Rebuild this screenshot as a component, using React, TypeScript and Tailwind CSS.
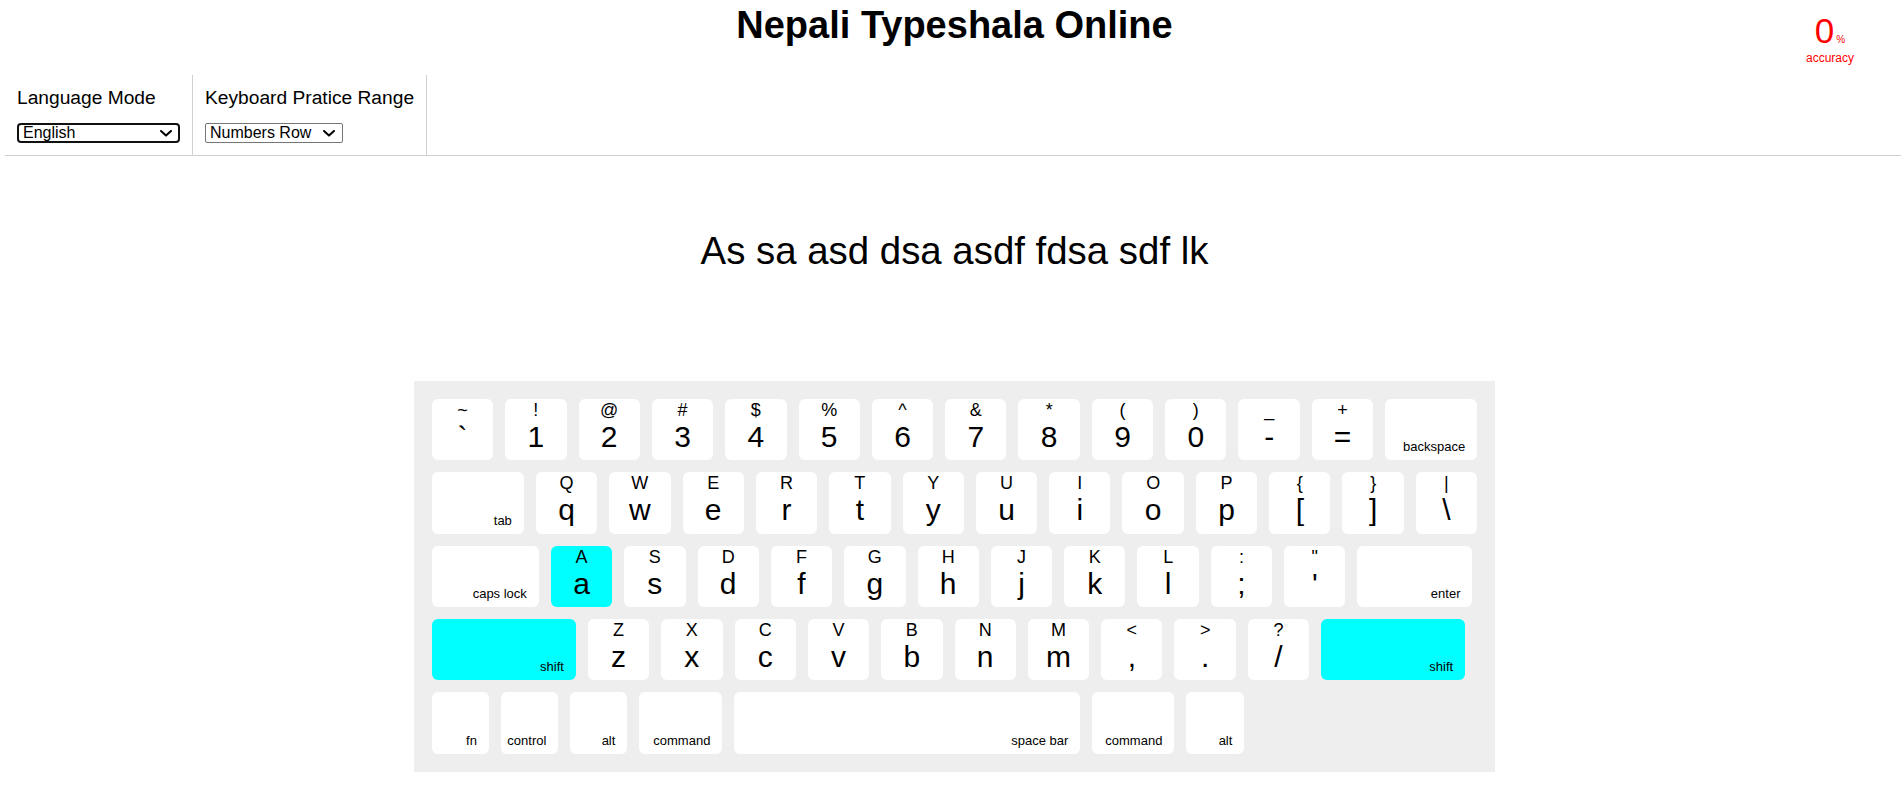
import React from "react";

type KeyDef = { t: string; b: string; hl?: boolean };

function Key({ t, b, hl }: KeyDef) {
  return (
    <div
      className={`${hl ? "bg-[#00ffff]" : "bg-white"} w-[61.33px] h-[61.33px] shrink-0 rounded-[6px] flex flex-col items-center pt-[2px] text-black`}
    >
      <div className="text-[18px] leading-[18px] h-[18px]">{t}</div>
      <div className="text-[30px] leading-[30px] mt-[3px]">{b}</div>
    </div>
  );
}

function Mod({ label, w, hl }: { label: string; w: string; hl?: boolean }) {
  return (
    <div
      className={`${hl ? "bg-[#00ffff]" : "bg-white"} ${w} h-[61.33px] shrink-0 rounded-[6px] flex items-end justify-end pr-3 pb-[7px]`}
    >
      <span className="text-[13px] leading-[13px] text-black whitespace-nowrap">{label}</span>
    </div>
  );
}

function Chevron() {
  return (
    <svg
      className="pointer-events-none absolute right-[8px] top-[7px]"
      width="12"
      height="7"
      viewBox="0 0 12 7"
      fill="none"
    >
      <path d="M1 1 L6 5.6 L11 1" stroke="#000" strokeWidth="2" strokeLinecap="round" strokeLinejoin="round" />
    </svg>
  );
}

const row1: KeyDef[] = [
  { t: "~", b: "`" },
  { t: "!", b: "1" },
  { t: "@", b: "2" },
  { t: "#", b: "3" },
  { t: "$", b: "4" },
  { t: "%", b: "5" },
  { t: "^", b: "6" },
  { t: "&", b: "7" },
  { t: "*", b: "8" },
  { t: "(", b: "9" },
  { t: ")", b: "0" },
  { t: "_", b: "-" },
  { t: "+", b: "=" },
];

const row2: KeyDef[] = [
  { t: "Q", b: "q" },
  { t: "W", b: "w" },
  { t: "E", b: "e" },
  { t: "R", b: "r" },
  { t: "T", b: "t" },
  { t: "Y", b: "y" },
  { t: "U", b: "u" },
  { t: "I", b: "i" },
  { t: "O", b: "o" },
  { t: "P", b: "p" },
  { t: "{", b: "[" },
  { t: "}", b: "]" },
  { t: "|", b: "\\" },
];

const row3: KeyDef[] = [
  { t: "A", b: "a", hl: true },
  { t: "S", b: "s" },
  { t: "D", b: "d" },
  { t: "F", b: "f" },
  { t: "G", b: "g" },
  { t: "H", b: "h" },
  { t: "J", b: "j" },
  { t: "K", b: "k" },
  { t: "L", b: "l" },
  { t: ":", b: ";" },
  { t: '"', b: "'" },
];

const row4: KeyDef[] = [
  { t: "Z", b: "z" },
  { t: "X", b: "x" },
  { t: "C", b: "c" },
  { t: "V", b: "v" },
  { t: "B", b: "b" },
  { t: "N", b: "n" },
  { t: "M", b: "m" },
  { t: "<", b: "," },
  { t: ">", b: "." },
  { t: "?", b: "/" },
];

export default function App() {
  return (
    <div
      className="min-h-screen bg-white text-black"
      style={{ fontFamily: '"Liberation Sans", Arial, Helvetica, sans-serif' }}
    >
      {/* Header */}
      <div className="relative h-[75px] pt-[4px] pl-2">
        <h1 className="text-[38px] leading-[43px] font-bold text-center">Nepali Typeshala Online</h1>
        <div className="absolute top-[13px] right-[40px] w-[62px] flex flex-col items-center text-[#ff0000]">
          <div className="flex items-baseline">
            <span className="text-[35px] leading-[35px]">0</span>
            <span className="text-[10px] leading-[10px] ml-[2px]">%</span>
          </div>
          <div className="text-[12px] leading-[12px] mt-[4px]">accuracy</div>
        </div>
      </div>

      {/* Nav */}
      <div className="ml-[5px] flex border-b border-[#d0d0d0]">
        <div className="px-3 pt-3 pb-3 border-r border-[#d0d0d0]">
          <div className="text-[19.2px] leading-[22px] mb-[14px] whitespace-nowrap">Language Mode</div>
          <div className="relative w-[163px] h-[20px]">
            <select
              defaultValue="English"
              className="block appearance-none w-[163px] h-[20px] text-[16px] leading-[16px] pl-[4px] border-2 border-[#101010] rounded-[4px] bg-white text-black"
            >
              <option>English</option>
              <option>Nepali</option>
            </select>
            <Chevron />
          </div>
        </div>
        <div className="px-3 pt-3 pb-3 border-r border-[#d0d0d0]">
          <div className="text-[19.2px] leading-[22px] mb-[14px] whitespace-nowrap">Keyboard Pratice Range</div>
          <div className="relative w-[138px] h-[20px]">
            <select
              defaultValue="Numbers Row"
              className="block appearance-none w-[138px] h-[20px] text-[16px] leading-[16px] pl-[4px] border border-[#767676] rounded-[2px] bg-white text-black"
            >
              <option>Numbers Row</option>
              <option>Home Row</option>
              <option>Top Row</option>
              <option>Bottom Row</option>
            </select>
            <Chevron />
          </div>
        </div>
      </div>

      {/* Main */}
      <div className="pl-2">
        <div className="mt-[73px] text-center text-[38.4px] leading-[44px]">As sa asd dsa asdf fdsa sdf lk</div>

        <div className="mt-[108px] flex justify-center">
          <div className="bg-[#eeeeee] p-[18px] flex flex-col gap-[12px]">
            <div className="flex gap-[12px]">
              {row1.map((k) => (
                <Key key={k.b} {...k} />
              ))}
              <Mod label="backspace" w="w-[92px]" />
            </div>
            <div className="flex gap-[12px]">
              <Mod label="tab" w="w-[92px]" />
              {row2.map((k) => (
                <Key key={k.b} {...k} />
              ))}
            </div>
            <div className="flex gap-[12px]">
              <Mod label="caps lock" w="w-[107px]" />
              {row3.map((k) => (
                <Key key={k.b} {...k} />
              ))}
              <Mod label="enter" w="w-[115px]" />
            </div>
            <div className="flex gap-[12px]">
              <Mod label="shift" w="w-[144px]" hl />
              {row4.map((k) => (
                <Key key={k.b} {...k} />
              ))}
              <Mod label="shift" w="w-[144px]" hl />
            </div>
            <div className="flex gap-[12px]">
              <Mod label="fn" w="w-[57px]" />
              <Mod label="control" w="w-[57.5px]" />
              <Mod label="alt" w="w-[57px]" />
              <Mod label="command" w="w-[83px]" />
              <Mod label="space bar" w="w-[346px]" />
              <Mod label="command" w="w-[82px]" />
              <Mod label="alt" w="w-[58px]" />
            </div>
          </div>
        </div>
      </div>
    </div>
  );
}
